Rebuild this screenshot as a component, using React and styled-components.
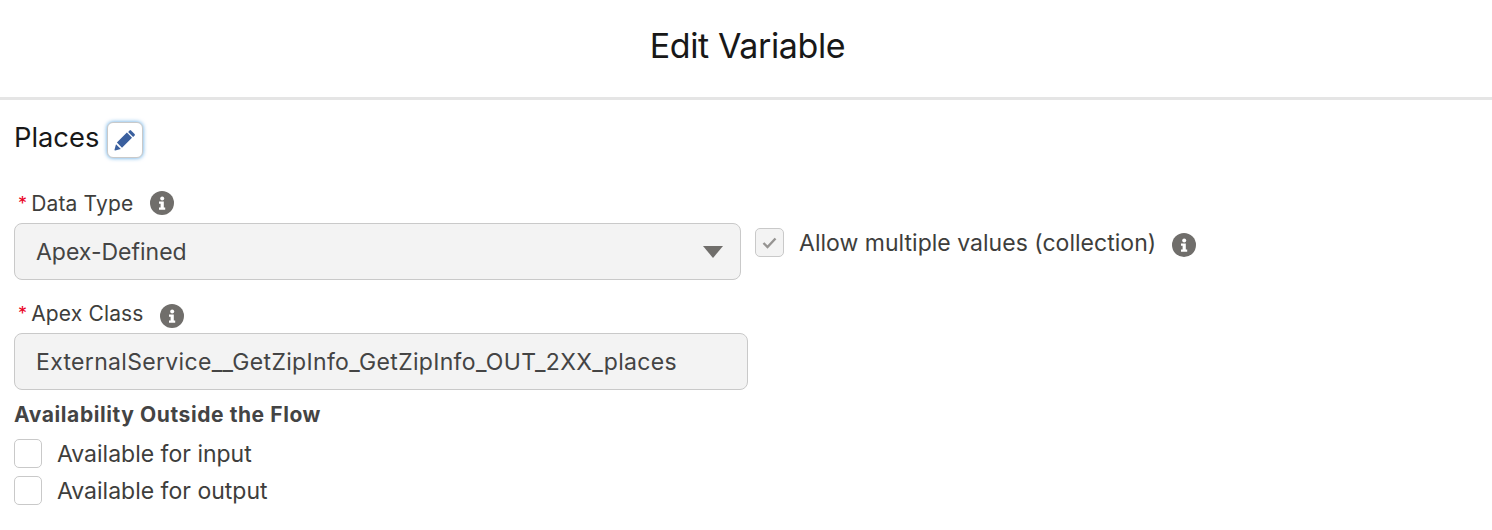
import React from "react";
import styled, { createGlobalStyle } from "styled-components";

const GlobalStyle = createGlobalStyle`
  html, body {
    margin: 0;
    padding: 0;
    background: #fff;
    font-family: Inter, "Liberation Sans", sans-serif;
    color: #3e3e3c;
  }
`;

const Page = styled.div`
  width: 1492px;
  height: 530px;
  overflow: hidden;
`;

const Header = styled.header`
  height: 90px;
  padding-bottom: 7px;
  border-bottom: 3px solid #e5e5e5;
  display: flex;
  align-items: center;
  justify-content: center;
  padding-left: 3px;
  font-size: 34px;
  letter-spacing: -0.4px;
  color: #181818;
`;

const Body = styled.main`
  padding: 22px 14px 0;
`;

const TitleRow = styled.div`
  display: flex;
  align-items: center;
  gap: 8px;
  height: 36px;
  font-size: 27.3px;
  line-height: 32px;
  color: #181818;
`;

const TitleText = styled.span`
  padding-bottom: 4px;
`;

const EditButton = styled.button`
  width: 36px;
  height: 36px;
  padding: 0;
  background: #fff;
  border: 1px solid #c9c9c9;
  border-radius: 6px;
  box-shadow: 0 0 4px #0176d3aa;
  display: flex;
  align-items: center;
  justify-content: center;
`;

const Label = styled.div`
  display: flex;
  align-items: center;
  height: 24px;
  padding-left: 4px;
  font-size: 21px;
  letter-spacing: 0.15px;
`;

const Star = styled.span`
  color: #ea001e;
  margin-right: 4px;
  font-size: 18px;
`;

const InfoBadge = styled.svg`
  width: 24px;
  height: 24px;
  margin-left: ${(p) => p.$gap}px;
  margin-top: ${(p) => p.$drop || 0}px;
  flex: none;
`;

const TypeField = styled.section`
  margin-top: 33px;
`;

const TypeRow = styled.div`
  display: flex;
  align-items: flex-start;
  margin-top: 8px;
`;

const ReadOnlyBox = styled.div`
  box-sizing: border-box;
  width: ${(p) => p.$width}px;
  height: 57px;
  padding-left: 21px;
  padding-right: 17px;
  display: flex;
  align-items: center;
  justify-content: space-between;
  background: #f3f3f3;
  border: 1px solid #c9c9c9;
  border-radius: 8px;
  font-size: 23px;
  letter-spacing: ${(p) => p.$spacing || 0}px;
  color: #444;
`;

const Caret = styled.span`
  width: 0;
  height: 0;
  border-left: 10px solid transparent;
  border-right: 10px solid transparent;
  border-top: 12px solid #706e6b;
`;

const Collection = styled.div`
  display: flex;
  align-items: center;
  margin-left: 14px;
  margin-top: 5px;
  font-size: 23px;
  letter-spacing: 0.02px;
`;

const Check = styled.span`
  box-sizing: border-box;
  width: ${(p) => (p.$disabled ? 29 : 28)}px;
  height: 29px;
  flex: none;
  display: flex;
  align-items: center;
  justify-content: center;
  margin-right: 15px;
  background: ${(p) => (p.$disabled ? "#f3f3f3" : "#fff")};
  border: 1px solid #c9c9c9;
  border-radius: 5px;
`;

const ClassField = styled.section`
  margin-top: 21px;
`;

const ClassBox = styled(ReadOnlyBox)`
  margin-top: 8px;
  padding-top: 1px;
`;

const Availability = styled.section`
  margin-top: 12px;
`;

const SectionTitle = styled.div`
  height: 25px;
  line-height: 25px;
  font-size: 21px;
  font-weight: 700;
  letter-spacing: 0.58px;
  color: #444;
`;

const OptionList = styled.div`
  display: flex;
  flex-direction: column;
  gap: 8px;
  margin-top: 12px;
`;

const Option = styled.div`
  display: flex;
  align-items: center;
  font-size: 23px;
`;

const Info = ({ gap, drop }) => (
  <InfoBadge $gap={gap} $drop={drop} viewBox="0 0 24 24">
    <circle cx="12" cy="12" r="12" fill="#706e6b" />
    <circle cx="12.2" cy="7.6" r="2" fill="#fff" />
    <path d="M9 10.6h4.8v6h1.4v2.2H9v-2.2h1.6v-3.8H9z" fill="#fff" />
  </InfoBadge>
);

export default function App() {
  return (
    <Page>
      <GlobalStyle />
      <Header>Edit Variable</Header>
      <Body>
        <TitleRow>
          <TitleText>Places</TitleText>
          <EditButton aria-label="Edit">
            <svg width="22" height="22" viewBox="0 0 22 22">
              <path d="M15.6 1.4a1 1 0 0 1 1.4 0l3.6 3.6a1 1 0 0 1 0 1.4l-1.5 1.5-5-5z" fill="#3a5f9e" />
              <path d="M12.9 3.6l5.1 5.1L8 18.7l-5.1-5.1z" fill="#3a5f9e" />
              <path d="M2 15.2l4.8 4.8-5.6 1.5c-.5.1-.8-.2-.7-.7z" fill="#3a5f9e" />
            </svg>
          </EditButton>
        </TitleRow>
        <TypeField>
          <Label>
            <Star>*</Star>Data Type<Info gap={17} />
          </Label>
          <TypeRow>
            <ReadOnlyBox $width={727}>
              Apex-Defined
              <Caret />
            </ReadOnlyBox>
            <Collection>
              <Check $disabled>
                <svg width="17" height="17" viewBox="0 0 17 17">
                  <path d="M2.5 9l4 4 8-8.5" fill="none" stroke="#969492" strokeWidth="2.4" />
                </svg>
              </Check>
              Allow multiple values (collection)
              <Info gap={16} drop={5} />
            </Collection>
          </TypeRow>
        </TypeField>
        <ClassField>
          <Label>
            <Star>*</Star>Apex Class<Info gap={16} drop={6} />
          </Label>
          <ClassBox $width={734} $spacing={0.32}>
            ExternalService__GetZipInfo_GetZipInfo_OUT_2XX_places
          </ClassBox>
        </ClassField>
        <Availability>
          <SectionTitle>Availability Outside the Flow</SectionTitle>
          <OptionList>
            <Option>
              <Check />
              Available for input
            </Option>
            <Option>
              <Check />
              Available for output
            </Option>
          </OptionList>
        </Availability>
      </Body>
    </Page>
  );
}
